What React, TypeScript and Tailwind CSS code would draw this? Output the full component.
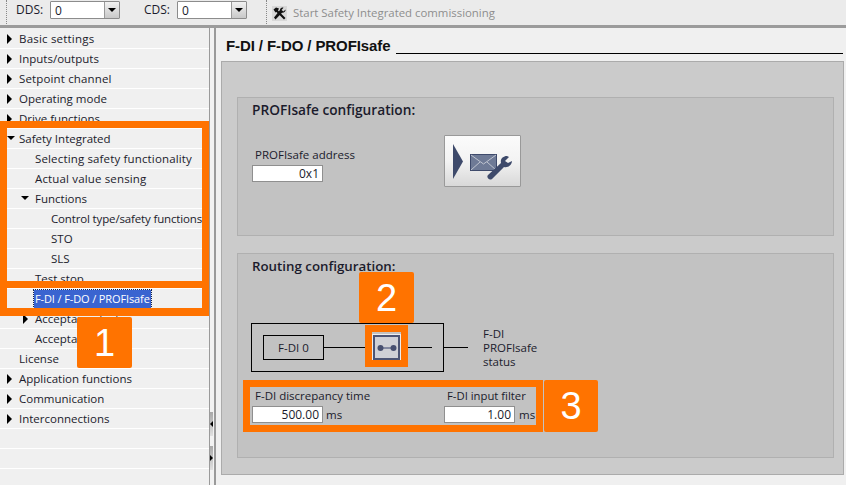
const font = "font-['Open_Sans',sans-serif]";

type Row = { label: string; indent: number; arrow?: string; selected?: boolean; tweak?: string };

const treeRows: Row[] = [
  { label: 'Basic settings', indent: 0, arrow: 'right', tweak: 'tracking-[0.2px]' },
  { label: 'Inputs/outputs', indent: 0, arrow: 'right' },
  { label: 'Setpoint channel', indent: 0, arrow: 'right', tweak: 'tracking-[0.15px]' },
  { label: 'Operating mode', indent: 0, arrow: 'right' },
  { label: 'Drive functions', indent: 0, arrow: 'right' },
  { label: 'Safety Integrated', indent: 0, arrow: 'down' },
  { label: 'Selecting safety functionality', indent: 1, tweak: 'tracking-[0.15px]' },
  { label: 'Actual value sensing', indent: 1, tweak: 'tracking-[0.15px]' },
  { label: 'Functions', indent: 1, arrow: 'down' },
  { label: 'Control type/safety functions', indent: 2, tweak: 'tracking-[-0.15px]' },
  { label: 'STO', indent: 2 },
  { label: 'SLS', indent: 2 },
  { label: 'Test stop', indent: 1 },
  { label: 'F-DI / F-DO / PROFIsafe', indent: 1, selected: true },
  { label: 'Acceptance test', indent: 1, arrow: 'right' },
  { label: 'Acceptance status', indent: 1 },
  { label: 'License', indent: 0 },
  { label: 'Application functions', indent: 0, arrow: 'right' },
  { label: 'Communication', indent: 0, arrow: 'right' },
  { label: 'Interconnections', indent: 0, arrow: 'right' },
  { label: '', indent: 0 },
  { label: '', indent: 0 },
  { label: '', indent: 0 },
];

const indentClass = ['pl-[19px]', 'pl-[35px]', 'pl-[51px]'];
const arrowRight = ['left-[7px]', 'left-[23px]', 'left-[39px]'];
const arrowDown = ['left-[7px]', 'left-[21px]', 'left-[37px]'];

function Combo({ value }: { value: string }) {
  return (
    <div className="w-[70px] h-[18px] flex bg-white border border-[#8c8c8c] rounded-[1px]">
      <div className="flex-1 pl-[4px] text-[12px] leading-[17px] text-[#1b1b2c]">{value}</div>
      <div className="w-[15px] border-l border-[#9a9a9a] bg-gradient-to-b from-[#f2f2f2] to-[#c9c9c9] flex items-center justify-center">
        <div className="w-0 h-0 border-l-[4px] border-r-[4px] border-t-[4px] border-l-transparent border-r-transparent border-t-black" />
      </div>
    </div>
  );
}

function NumInput({ value, className = '' }: { value: string; className?: string }) {
  return (
    <div className={`w-[71px] h-[17px] bg-white border border-[#8f8f8f] text-right pr-[3px] text-[12px] leading-[15px] text-[#1b1b2c] ${className}`}>
      {value}
    </div>
  );
}

function Badge({ n, className }: { n: string; className: string }) {
  return (
    <div className={`absolute bg-[#ff7300] rounded-[2px] flex items-center justify-center text-white text-[38px] leading-none font-['Liberation_Sans',sans-serif] ${className}`}>
      {n}
    </div>
  );
}

export default function App() {
  return (
    <div className={`relative w-[846px] h-[485px] overflow-hidden bg-[#f0f0f0] text-[11.5px] text-[#1b1b2c] ${font}`}>
      {/* Toolbar */}
      <div className="h-[28px] bg-[#ebebeb] border-b-[3px] border-[#9b9b9b] flex items-start">
        <div className="h-[24px] ml-[6px] border-l border-dotted border-[#888]" />
        <div className="w-[9px]" />
        <span className="mt-[1px] w-[34px] text-[12px] leading-[18px]">DDS:</span>
        <div className="mt-[1px]"><Combo value="0" /></div>
        <span className="mt-[1px] ml-[24px] w-[33px] text-[12px] leading-[18px]">CDS:</span>
        <div className="mt-[1px]"><Combo value="0" /></div>
        <div className="h-[24px] ml-[19px] border-l border-dotted border-[#888]" />
        <div className="ml-[5px] mt-[6px] w-[15px] h-[15px] bg-[#d8d8d8] flex items-center justify-center">
          <svg width="13" height="13" viewBox="0 0 13 13">
            <path d="M0.5 2.5 L3 0.5 L6 1.5 L5 3.5 L12.5 11 L11 12.5 L3.5 5 L2.5 5.5 Z" fill="#111" />
            <path d="M12.5 2.5 L10.5 4.5 L8.5 3 L10.5 0.8 C9 0 7 1 7 3 L1 10.5 L2.5 12.5 L9 5.8 C11 6 13 4.5 12.5 2.5 Z" fill="#111" />
          </svg>
        </div>
        <span className="ml-[6px] mt-[5px] text-[11.4px] leading-[16px] text-[#8e8e8e]">Start Safety Integrated commissioning</span>
      </div>

      <div className="flex h-[457px]">
        {/* Tree */}
        <div className="w-[209px] shrink-0 overflow-hidden">
          {treeRows.map((row, i) => (
            <div key={i} className={`relative h-[20px] border-b border-white whitespace-nowrap leading-[20px] ${indentClass[row.indent]} ${row.tweak ?? ''} ${i === 0 ? 'mt-px' : ''}`}>
              {row.arrow === 'right' && (
                <div className={`absolute top-[5px] w-0 h-0 border-t-[5px] border-b-[5px] border-l-[5px] border-t-transparent border-b-transparent border-l-black ${arrowRight[row.indent]}`} />
              )}
              {row.arrow === 'down' && (
                <div className={`absolute top-[7px] w-0 h-0 border-l-[4px] border-r-[4px] border-t-[4px] border-l-transparent border-r-transparent border-t-black ${arrowDown[row.indent]}`} />
              )}
              {row.selected ? (
                <span className="inline-block h-[18px] -ml-px px-px text-[11px] tracking-[-0.12px] leading-[18px] bg-[#3a64d0] text-white outline-1 outline-dotted outline-[#10204c]">{row.label}</span>
              ) : (
                row.label
              )}
            </div>
          ))}
        </div>

        {/* Splitter */}
        <div className="relative w-[7px] shrink-0 border-l-[1.5px] border-r-2 border-[#9a9a9a] bg-[#f2f2f2]">
          <div className="absolute left-0 top-[384px] w-[3px] h-[24px] bg-gradient-to-b from-[#a8a8a8] to-[#e0e0e0] flex items-center">
            <div className="w-0 h-0 border-t-[3px] border-b-[3px] border-r-[3px] border-t-transparent border-b-transparent border-r-black" />
          </div>
          <div className="absolute left-0 top-[418px] w-[3px] h-[24px] bg-gradient-to-b from-[#a8a8a8] to-[#e0e0e0] flex items-center">
            <div className="w-0 h-0 border-t-[3px] border-b-[3px] border-l-[3px] border-t-transparent border-b-transparent border-l-black" />
          </div>
        </div>

        {/* Main area */}
        <div className="flex-1 pl-[5px] pr-[2px]">
          <div className="h-[18px] mt-[9px] flex items-end pr-px">
            <span className="ml-[5px] text-[15px] leading-[18px] font-bold tracking-[-0.1px] text-[#111] font-['Liberation_Sans',sans-serif] whitespace-nowrap">F-DI / F-DO / PROFIsafe</span>
            <div className="flex-1 ml-[6px] mb-[1px] border-b border-black" />
          </div>

          <div className="mt-[6px] h-[414px] border border-[#ababab] bg-[#cbcbcb] pt-[35px] pl-[15px] pr-[9px]">
            {/* PROFIsafe group */}
            <div className="h-[139px] border border-[#b0b0b0] bg-[#c2c2c2] pt-[2px] pl-[14px]">
              <div className="text-[13.7px] leading-[20px] font-semibold text-[#1b1b2c]">PROFIsafe configuration:</div>
              <div className="flex mt-[16px]">
                <div className="w-[192px] pt-[11px]">
                  <div className="pl-[3px] text-[11.5px] leading-[16px]">PROFIsafe address</div>
                  <NumInput value="0x1" className="mt-[2px]" />
                </div>
                <div className="w-[77px] h-[52px] mt-[-1px] border border-[#999] rounded-[1px] bg-gradient-to-b from-[#fbfbfb] via-[#f3f3f3] to-[#d8d8d8] flex items-center justify-center">
                  <svg width="66" height="42" viewBox="0 0 66 42">
                    <path d="M3 4 L13 21.5 L3 39 Z" fill="#3e4a6b" />
                    <rect x="20.5" y="14.5" width="26" height="16" fill="#6e7a96" stroke="#3e4a6b" strokeWidth="1" />
                    <path d="M21 15 L33.5 24 L46 15 M21 30 L30 22 M46 30 L37 22" fill="none" stroke="#bfc4d0" strokeWidth="1" />
                    <path d="M57 16 C53 16 50 19 51 23 L38 35 C36 37 39 41 42 39 L54 27 C58 28 62 25 62 21 L58 23 L55 21 L59 17 Z" fill="#3e4a6b" />
                  </svg>
                </div>
              </div>
            </div>

            {/* Routing group */}
            <div className="mt-[17px] h-[205px] border border-[#b0b0b0] bg-[#c2c2c2] pl-[14px] pt-[2px]">
              <div className="text-[13.3px] leading-[20px] font-semibold text-[#1b1b2c]">Routing configuration:</div>

              {/* Diagram */}
              <div className="flex items-center mt-[47px] h-[49px] ml-[-1px]">
                <div className="w-[193px] h-[49px] border border-black flex items-center pl-[11px]">
                  <div className="w-[61px] h-[25px] border border-black text-center leading-[23px] text-[11.5px]">F-DI 0</div>
                  <div className="w-[48px] border-t border-black" />
                  <div className="w-[29px] h-[27px] border border-[#eee] outline-2 outline-[#4c5474] -outline-offset-3 bg-[#cfd0d6] flex items-center justify-center">
                    <svg width="22" height="10" viewBox="0 0 22 10">
                      <line x1="4.5" y1="5" x2="17.5" y2="5" stroke="#6a7290" strokeWidth="1.5" />
                      <circle cx="4.5" cy="5" r="3" fill="#474f70" />
                      <circle cx="17.5" cy="5" r="3" fill="#474f70" />
                    </svg>
                  </div>
                  <div className="w-[31px] border-t border-black" />
                </div>
                <div className="w-[24px] border-t border-black" />
                <div className="ml-[15px] text-[11.5px] leading-[14px]">
                  <div>F-DI</div>
                  <div>PROFIsafe</div>
                  <div>status</div>
                </div>
              </div>

              {/* Times */}
              <div className="flex items-end mt-[16px]">
                <div className="w-[192px]">
                  <div className="pl-[3px] text-[11.5px] leading-[16px]">F-DI discrepancy time</div>
                  <div className="flex items-center mt-[2px]">
                    <NumInput value="500.00" />
                    <span className="ml-[3px]">ms</span>
                  </div>
                </div>
                <div>
                  <div className="pl-[3px] text-[11.3px] leading-[16px]">F-DI input filter</div>
                  <div className="flex items-center mt-[2px]">
                    <NumInput value="1.00" />
                    <span className="ml-[4px]">ms</span>
                  </div>
                </div>
              </div>
            </div>
          </div>
        </div>
      </div>

      {/* Annotations */}
      <div className="absolute left-0 top-[121px] w-[209px] h-[160px] border-[7px] border-b-0 border-[#ff7300]" />
      <div className="absolute left-0 top-[281px] w-[209px] h-[35px] border-[7px] border-t-[7px] border-b-[8px] border-[#ff7300]" />
      <Badge n="1" className="left-[77px] top-[317px] w-[55px] h-[51px]" />
      <Badge n="2" className="left-[359px] top-[272px] w-[55px] h-[51px]" />
      <div className="absolute left-[365px] top-[325px] w-[43px] h-[42px] border-[7px] border-[#ff7300]" />
      <div className="absolute left-[243px] top-[380px] w-[300px] h-[52px] border-[7px] border-[#ff7300]" />
      <Badge n="3" className="left-[544px] top-[380px] w-[54px] h-[52px]" />
    </div>
  );
}
